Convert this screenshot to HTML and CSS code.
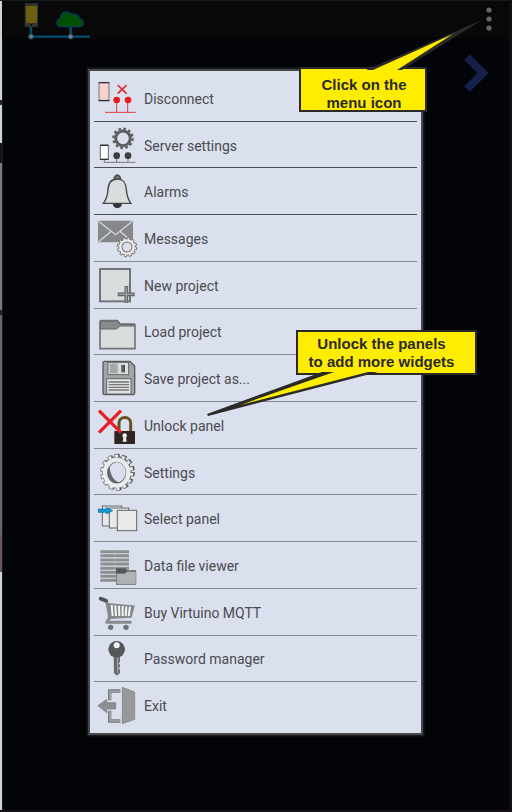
FILE: index.html
```html
<!DOCTYPE html>
<html lang="en">
<head>
<meta charset="utf-8">
<meta name="viewport" content="width=device-width, initial-scale=1">
<title>Virtuino MQTT</title>
<link rel="stylesheet" href="styles.css">
</head>
<body>
<div class="screen">
  <header class="topbar">
    <svg class="status" viewBox="66 0 210 120" aria-hidden="true">
      <path d="M93 76V107H270M212 76V107" fill="none" stroke="#004e70" stroke-width="7"/>
      <rect x="74" y="7" width="40" height="71" rx="4" fill="#333"/>
      <rect x="78" y="15" width="33" height="51" fill="#6a6010"/>
      <circle cx="94" cy="72" r="3" fill="#080808"/>
      <path d="M180 77C167 74 168 54 182 53C180 35 201 25 215 41C226 37 238 44 238 54C253 56 254 75 242 77Z" fill="#005000" stroke="#00405c" stroke-width="4"/>
      <circle cx="93" cy="107" r="7" fill="#747c82" stroke="#23576c" stroke-width="3"/>
      <circle cx="212" cy="107" r="7" fill="#747c82" stroke="#23576c" stroke-width="3"/>
    </svg>
    <button class="more" type="button" aria-label="Menu">
      <svg viewBox="0 0 12 28" aria-hidden="true"><g fill="#656565"><circle cx="6" cy="5" r="2.6"/><circle cx="6" cy="14" r="2.6"/><circle cx="6" cy="23" r="2.6"/></g></svg>
    </button>
  </header>
  <button class="next" type="button" aria-label="Next panel">
    <svg viewBox="0 0 28 40" aria-hidden="true"><path d="M4 4L20 20L4 36" fill="none" stroke="#14204a" stroke-width="8"/></svg>
  </button>
  <nav class="menu" aria-label="Main menu">
    <ul>
      <li><button type="button">
        <svg viewBox="33 33 132 132" aria-hidden="true"><rect x="42" y="53" width="30" height="53" fill="#f8d0d0" stroke="#777" stroke-width="3"/><path d="M41 53H73M41 107H73" stroke="#333" stroke-width="4"/><path d="M98 60L125 86M125 60L98 86" stroke="#e5252c" stroke-width="5"/><path d="M95 105V142M128 105V142M60 142H152" stroke="#e03c42" stroke-width="3"/><circle cx="95" cy="105" r="10" fill="#e8191f"/><circle cx="129" cy="105" r="10" fill="#e8191f"/></svg>
        <span>Disconnect</span></button></li>
      <li><button type="button">
        <svg viewBox="33 173 132 132" aria-hidden="true"><circle cx="114" cy="219" r="22" fill="none" stroke="#5d5f61" stroke-width="9"/><circle cx="114" cy="219" r="29" fill="none" stroke="#5d5f61" stroke-width="7" stroke-dasharray="8 7.2"/><path d="M58 282V291H151M95 271V291M129 271V291" fill="none" stroke="#777" stroke-width="3"/><rect x="46" y="239" width="24" height="43" rx="2" fill="#fff" stroke="#666" stroke-width="3"/><path d="M45 240H71M45 282H71" stroke="#333" stroke-width="4"/><circle cx="95" cy="271" r="10" fill="#3c3c3e"/><circle cx="129" cy="271" r="10" fill="#3c3c3e"/></svg>
        <span>Server settings</span></button></li>
      <li><button type="button">
        <svg viewBox="33 13 132 132" aria-hidden="true"><path d="M88 45V38Q97 24 106 38V45" fill="#777" stroke="#444" stroke-width="4"/><path d="M83 116A14 15 0 0 0 111 116Z" fill="#333"/><path d="M55 116C63 107 67 98 69 75C70 51 80 43 97 43C114 43 122 51 124 75C126 98 130 107 138 116Z" fill="#dadddd" stroke="#444648" stroke-width="4"/></svg>
        <span>Alarms</span></button></li>
      <li><button type="button">
        <svg viewBox="33 153 132 132" aria-hidden="true"><rect x="39" y="167" width="105" height="65" rx="2" fill="#85878a"/><path d="M41 169L92 209L142 169M41 230L79 199M142 230L105 199" fill="none" stroke="#d5d8df" stroke-width="4"/><circle cx="126" cy="246" r="25" fill="none" stroke="#77716e" stroke-width="11" stroke-dasharray="8 5.1"/><circle cx="126" cy="246" r="20" fill="none" stroke="#77716e" stroke-width="13"/><circle cx="126" cy="246" r="25" fill="none" stroke="#eeeeec" stroke-width="5" stroke-dasharray="5 8.1" stroke-dashoffset="-1.5"/><circle cx="126" cy="246" r="20" fill="none" stroke="#eeeeec" stroke-width="7"/></svg>
        <span>Messages</span></button></li>
      <li><button type="button">
        <svg viewBox="33 8 132 132" aria-hidden="true"><rect x="45" y="26" width="90" height="97" fill="#d9dddd" stroke="#737678" stroke-width="6"/><path d="M124 77V127M98 102H149" stroke="#626568" stroke-width="11"/><path d="M124 80V124M101 102H146" stroke="#a0a3a5" stroke-width="4"/></svg>
        <span>New project</span></button></li>
      <li><button type="button">
        <svg viewBox="33 148 132 132" aria-hidden="true"><path d="M45 267V187Q45 183 50 183H97L106 193H147Q150 193 150 197V267Z" fill="#d9dddd" stroke="#737678" stroke-width="5"/><path d="M46 208V185H97L106 194H149V199H105L94 208Z" fill="#888a8c" stroke="#66696b" stroke-width="3"/></svg>
        <span>Load project</span></button></li>
      <li><button type="button">
        <svg viewBox="33 13 132 132" aria-hidden="true"><path d="M54 33Q54 29 58 29H135L149 43V124Q149 129 144 129H58Q54 129 54 124Z" fill="#a1a5a7" stroke="#56595c" stroke-width="4"/><rect x="69" y="32" width="62" height="37" fill="#dadddd" stroke="#666" stroke-width="3"/><rect x="74" y="36" width="24" height="29" fill="#a5a8aa"/><rect x="109" y="40" width="11" height="22" fill="#555"/><rect x="65" y="81" width="73" height="46" fill="#e0e3e3" stroke="#666" stroke-width="3"/><path d="M71 91H132M71 99H132M71 107H132M71 115H132" stroke="#777" stroke-width="4"/></svg>
        <span>Save project as...</span></button></li>
      <li><button type="button">
        <svg viewBox="33 153 132 132" aria-hidden="true"><path d="M102 238V213C102 191 137 191 137 213V238" fill="none" stroke="#67501f" stroke-width="9"/><rect x="88" y="237" width="62" height="39" rx="2" fill="#30251f"/><circle cx="119" cy="251" r="7" fill="#eee"/><path d="M116 251H122L125 269H113Z" fill="#eee"/><path d="M42 176L108 242M108 176L42 242" stroke="#e91e27" stroke-width="10"/></svg>
        <span>Unlock panel</span></button></li>
      <li><button type="button">
        <svg viewBox="33 11 132 132" aria-hidden="true"><g fill="none"><ellipse cx="100" cy="77" rx="44" ry="49" stroke="#515457" stroke-width="11" stroke-dasharray="12 9"/><ellipse cx="96" cy="78" rx="44" ry="49" stroke="#777b7d" stroke-width="13" stroke-dasharray="13 8"/><ellipse cx="96" cy="78" rx="35" ry="39" stroke="#66696b" stroke-width="18"/><ellipse cx="96" cy="78" rx="44" ry="49" stroke="#eaeceb" stroke-width="8" stroke-dasharray="9 12" stroke-dashoffset="-2"/><ellipse cx="95" cy="79" rx="35" ry="39" stroke="#eaeceb" stroke-width="13"/><path d="M69 67C61 91 79 116 106 109C88 105 76 89 74 62" fill="#62676b"/></g></svg>
        <span>Settings</span></button></li>
      <li><button type="button">
        <svg viewBox="33 151 132 132" aria-hidden="true"><g fill="#e7eae9" stroke="#646769" stroke-width="3"><rect x="52" y="181" width="58" height="60"/><rect x="73" y="187" width="58" height="60"/><rect x="97" y="194" width="58" height="61"/></g><path d="M40 190H64V185L83 195L64 205V200H40Z" fill="#1598d2" stroke="#0c719f" stroke-width="2"/></svg>
        <span>Select panel</span></button></li>
      <li><button type="button">
        <svg viewBox="33 9 132 132" aria-hidden="true"><path d="M46 35H132M46 47H132M46 60H132M46 72H132M46 85H132M46 97H95M46 109H95M46 121H95" stroke="#8b8e8f" stroke-width="9"/><path d="M89 29V90" stroke="#b5b9bd" stroke-width="2"/><path d="M93 134V85H121L127 91H153V134Z" fill="#55585a"/><path d="M95 101H119L126 95H153V133H95Z" fill="#b0b3b4" stroke="#868989" stroke-width="2"/></svg>
        <span>Data file viewer</span></button></li>
      <li><button type="button">
        <svg viewBox="33 149 132 132" aria-hidden="true"><path d="M47 175L65 182L74 232L65 246H136" fill="none" stroke="#888b8d" stroke-width="9" stroke-linecap="round" stroke-linejoin="round"/><path d="M47 175L63 181" stroke="#505355" stroke-width="11" stroke-linecap="round"/><path d="M68 190L147 197L138 230L74 234Z" fill="#85888a" stroke="#85888a" stroke-width="4"/><path d="M80 194L83 227M91 195L93 227M102 196L103 227M113 197L113 227M124 198L122 227M135 199L131 227" stroke="#f4f5f5" stroke-width="6"/><circle cx="77" cy="261" r="8" fill="#707375"/><circle cx="123" cy="261" r="8" fill="#707375"/></svg>
        <span>Buy Virtuino MQTT</span></button></li>
      <li><button type="button">
        <svg viewBox="33 13 132 132" aria-hidden="true"><path d="M86 70H105V124L96 132L87 124Z" fill="#66686a"/><path d="M98 77V125" stroke="#a0a2a4" stroke-width="4"/><path d="M105 91L100 95L105 100M105 105L100 109L105 114" fill="#dbe0ee" stroke="#777" stroke-width="2"/><circle cx="95" cy="53" r="25" fill="#555759"/><circle cx="95" cy="41" r="9" fill="#f2f4f8"/></svg>
        <span>Password manager</span></button></li>
      <li><button type="button">
        <svg viewBox="33 153 132 132" aria-hidden="true"><path d="M106 177H74V205M74 236V267H106" fill="none" stroke="#747779" stroke-width="10"/><path d="M105 178H75V205M75 236V266H105" fill="none" stroke="#9b9e9f" stroke-width="6"/><path d="M112 166L149 180V262L112 275Z" fill="#969998" stroke="#77797a" stroke-width="2"/><path d="M39 221L65 202V212H92V231H65V242Z" fill="#8d9091" stroke="#737678" stroke-width="2"/></svg>
        <span>Exit</span></button></li>
    </ul>
  </nav>
  <aside class="callout callout-menu">
    <svg viewBox="366 19 118 51" aria-hidden="true"><path d="M366 70L482 20L402 70Z" fill="#2b2a29"/><path d="M373 70L453 34L397 70Z" fill="#ffed00"/></svg>
    <p>Click on the<br>menu icon</p>
  </aside>
  <aside class="callout callout-unlock">
    <svg viewBox="206 372 174 45" aria-hidden="true"><path d="M322 372H378L208 416L207 414Z" fill="#2b2a29"/><path d="M334 372H368L240 405Z" fill="#ffed00"/></svg>
    <p>Unlock the panels<br>to add more widgets</p>
  </aside>
</div>
</body>
</html>
```
FILE: styles.css
```css
* {
  box-sizing: border-box;
}

body {
  margin: 0;
  background: #030408;
}

button {
  margin: 0;
  padding: 0;
  border: 0;
  background: none;
  color: inherit;
  font: inherit;
  text-align: left;
}

svg {
  display: block;
}

.screen {
  position: relative;
  min-height: 100vh;
  padding: 0 3px 0 2px;
  background:
    linear-gradient(to right, #17191b, #17191b) 2px 0 / 1px 100% no-repeat,
    linear-gradient(#101014, #101014) right 0 / 3px 100% no-repeat,
    linear-gradient(#17191b, #17191b) 0 0 / 100% 1px no-repeat,
    linear-gradient(#181216, #181216) 0 100% / 100% 2px no-repeat,
    linear-gradient(#c9d4da 0 100px, #34203d 100px 105px, #c9d4da 105px 143px, #151515 143px 163px, #777b80 163px 310px, #222 310px 315px, #66666b 315px 535px, #6b5458 535px 572px, #c9d4da 572px) 0 0 / 2px 100% no-repeat,
    radial-gradient(circle, #020204 1px, transparent 2px) 0 0 / 8px 8px,
    #030408;
}

.topbar {
  display: flex;
  align-items: flex-start;
  justify-content: space-between;
  height: 38px;
  padding: 0 14px 0 20px;
  border-top: 1px solid #17191b;
  background: #080808;
}

.status {
  width: 70px;
  height: 40px;
}

.more {
  padding-top: 4px;
}

.more svg {
  width: 12px;
  height: 28px;
}

.next {
  display: block;
  height: 31px;
  margin: 0 18px 0 auto;
  padding-top: 15px;
}

.next svg {
  width: 28px;
  height: 40px;
}

.menu {
  margin: 0 86px 76px;
  padding: 4px;
  border: 2px solid #46474a;
  background: #dbe0ee;
  box-shadow: 0 0 2px 1px #242528;
}

.menu ul {
  display: grid;
  grid-auto-rows: 1fr;
  min-height: 654px;
  margin: 0;
  padding: 0;
  list-style: none;
}

.menu li {
  display: flex;
  border-bottom: 1px solid #85888f;
}

.menu li:nth-child(-n + 3) {
  border-color: #4b4d53;
}

.menu li:last-child {
  border-color: transparent;
}

.menu button {
  display: flex;
  flex: 1;
  align-items: center;
  gap: 4px;
  padding-left: 2px;
  color: #4a4b4f;
  font: 14px/20px Roboto, "Liberation Sans", sans-serif;
}

.menu span {
  padding-top: 2px;
}

.menu svg {
  width: 44px;
  height: 44px;
}

.callout {
  position: absolute;
  border: 2px solid #2b2a29;
  background: #ffed00;
  color: #2b2a29;
  font: bold 15px/18px "Liberation Sans", Arial, sans-serif;
  text-align: center;
}

.callout p {
  margin: 0;
}

.callout svg {
  position: absolute;
}

.callout-menu {
  top: 67px;
  right: 85px;
  width: 128px;
  height: 45px;
  padding: 7px 0 0 2px;
}

.callout-menu svg {
  top: -50px;
  left: 65px;
  width: 118px;
  height: 51px;
}

.callout-unlock {
  top: 330px;
  right: 35px;
  width: 181px;
  padding: 3px 10px 2px 0;
}

.callout-unlock svg {
  top: 40px;
  left: -92px;
  width: 174px;
  height: 45px;
}
```
